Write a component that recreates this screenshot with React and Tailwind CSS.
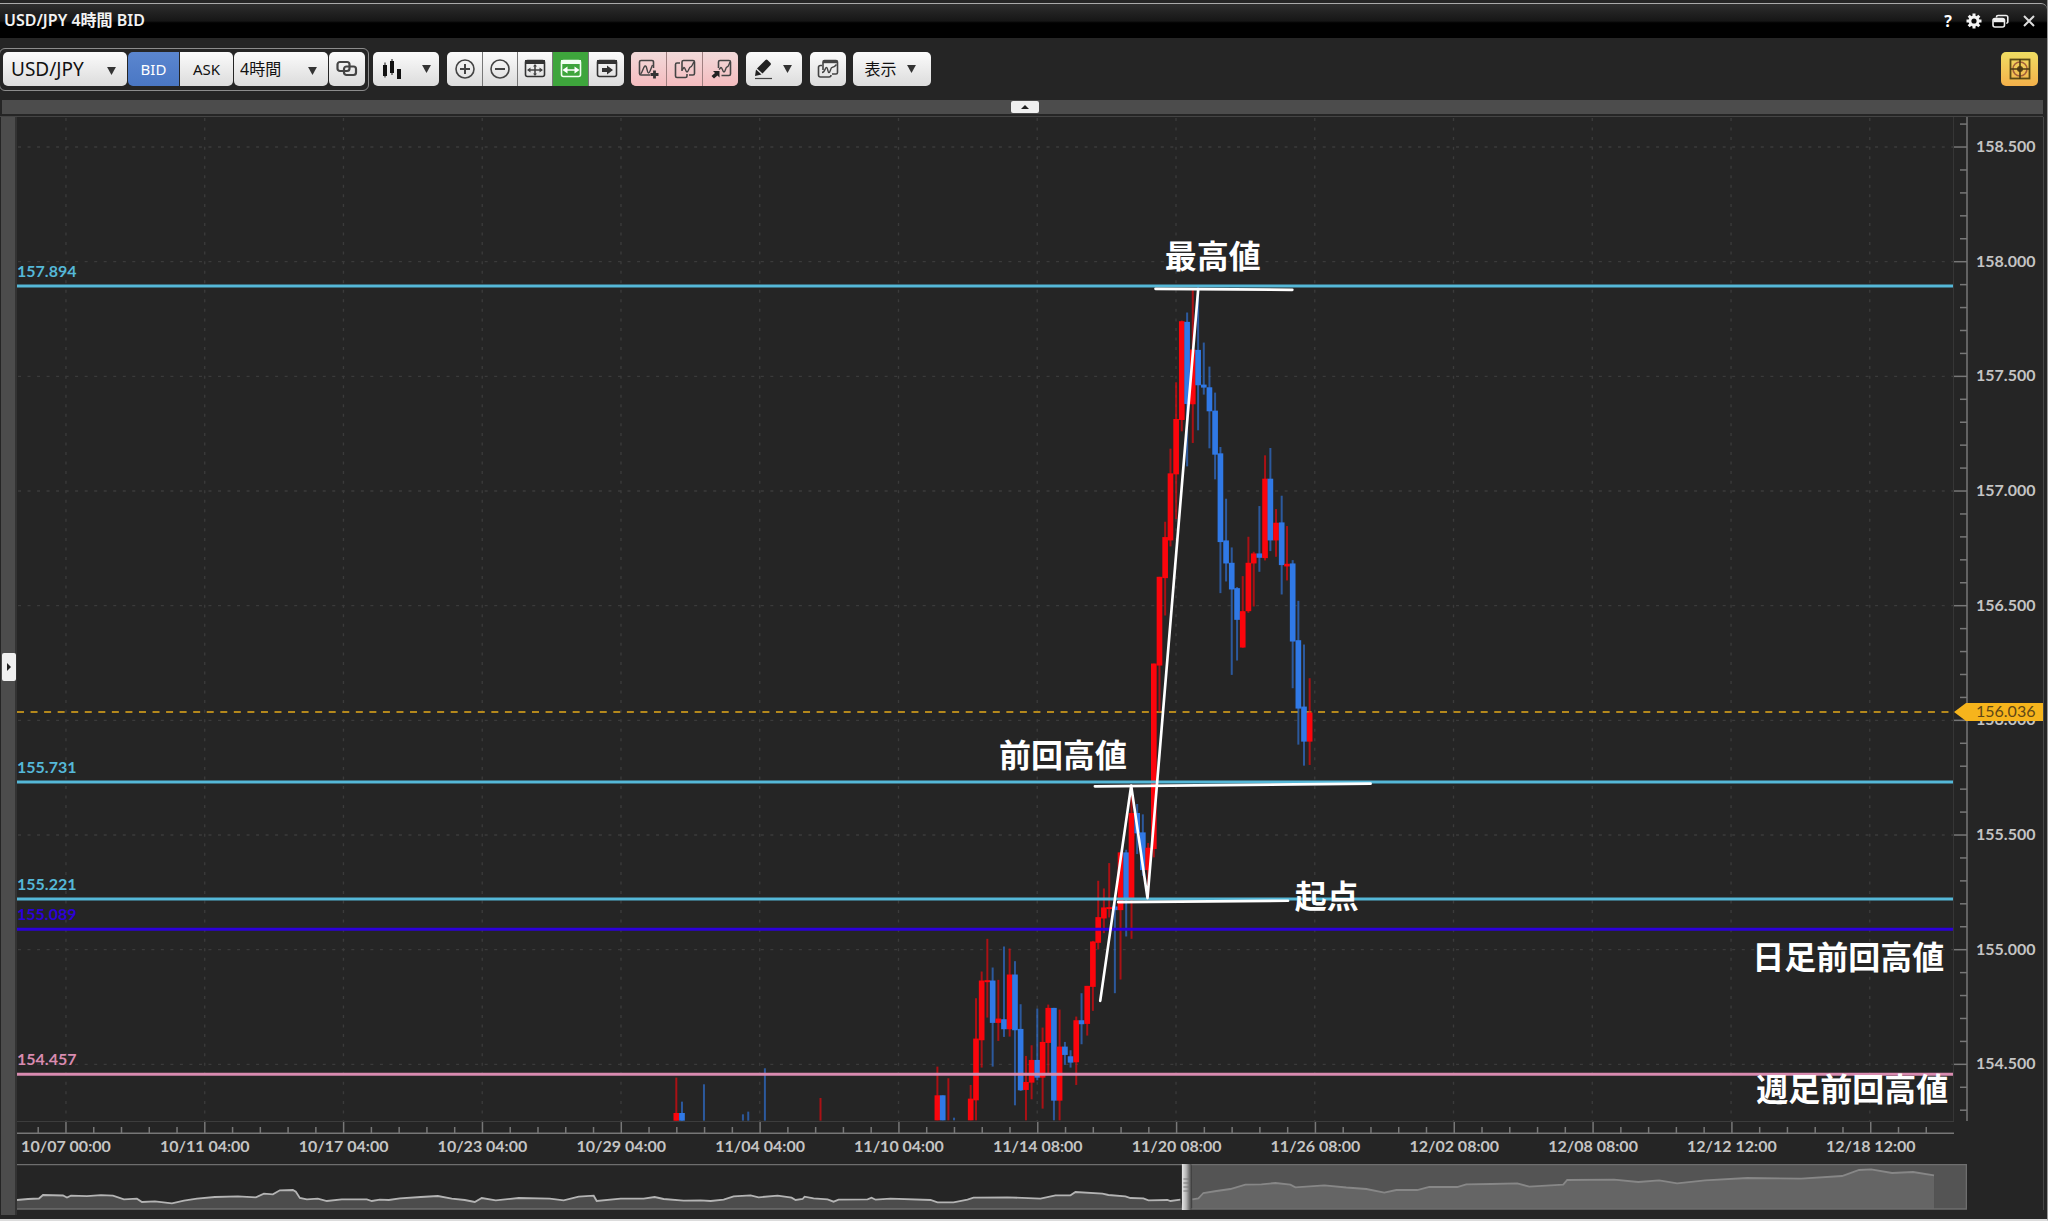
import React from "react";

const PLOT_W = 1938;
const PLOT_H = 1003;
const priceY = (p) => 30 + (158.5 - p) * 229.1;
const pctY = (y) => (y / PLOT_H) * 100 + "%";
const pctX = (x) => (x / PLOT_W) * 100 + "%";

const PRICES = [158.5, 158.0, 157.5, 157.0, 156.5, 156.0, 155.5, 155.0, 154.5];
const TIMES = [
  "10/07 00:00", "10/11 04:00", "10/17 04:00", "10/23 04:00", "10/29 04:00",
  "11/04 04:00", "11/10 04:00", "11/14 08:00", "11/20 08:00", "11/26 08:00",
  "12/02 08:00", "12/08 08:00", "12/12 12:00", "12/18 12:00",
];
const timeX = (i) => 49 + i * 138.9;

const LEVELS = [
  { price: 157.894, color: "#55b8d8" },
  { price: 155.731, color: "#55b8d8" },
  { price: 155.221, color: "#55b8d8" },
  { price: 155.089, color: "#2c00d8" },
  { price: 154.457, color: "#d98bb0" },
];

const NOTES = [
  { text: "最高値", x: 1149, y: 139 },
  { text: "前回高値", x: 983, y: 637 },
  { text: "起点", x: 1279, y: 778 },
  { text: "日足前回高値", x: 1737, y: 839 },
  { text: "週足前回高値", x: 1741, y: 971 },
];

// Candles, in thirds of a plot unit: [x, up, wick top, body top, body bottom, wick bottom]
const SEGMENTS = [
  {
    at: [1872, 2799],
    bars: [
      [108, 1, 80, 186, 209, 209], [125, 0, 152, 186, 209, 209], [191, 0, 100, 0, 0, 209],
      [308, 0, 190, 0, 0, 209], [324, 0, 182, 0, 0, 209], [374, 0, 52, 0, 0, 209], [541, 1, 141, 0, 0, 209],
    ],
  },
  {
    at: [2652, 1749],
    bars: [
      [112, 1, 1097, 1183, 1258, 1258], [128, 0, 1183, 1183, 1258, 1258], [145, 1, 1132, 0, 0, 1258],
      [162, 0, 1250, 0, 0, 1258], [212, 1, 1152, 1193, 1258, 1258], [228, 1, 892, 1013, 1198, 1258],
      [245, 1, 812, 839, 1018, 1100], [262, 1, 714, 838, 844, 950], [278, 0, 800, 839, 966, 1097],
      [295, 1, 837, 953, 966, 1020], [312, 0, 737, 955, 985, 1008], [329, 1, 743, 821, 985, 1007],
      [345, 0, 781, 821, 988, 1213], [362, 0, 910, 984, 1168, 1170], [378, 1, 1065, 1143, 1167, 1258],
      [395, 1, 1033, 1077, 1145, 1195], [412, 0, 923, 1077, 1130, 1138], [428, 1, 980, 1023, 1130, 1223],
      [445, 1, 911, 921, 1026, 1120], [462, 0, 921, 921, 1199, 1258], [479, 1, 926, 1037, 1199, 1258],
      [495, 0, 1023, 1037, 1062, 1092], [512, 0, 1048, 1066, 1085, 1100], [529, 1, 947, 958, 1084, 1152],
      [545, 0, 877, 958, 970, 1030], [562, 1, 855, 855, 969, 1004], [579, 1, 720, 722, 858, 930],
      [595, 1, 540, 649, 726, 746], [612, 1, 563, 620, 653, 697], [628, 1, 487, 619, 625, 650],
      [645, 0, 600, 617, 628, 877], [662, 1, 455, 455, 628, 836], [679, 0, 447, 455, 592, 707],
      [695, 1, 260, 337, 592, 714], [712, 0, 310, 337, 398, 460], [729, 0, 341, 395, 508, 525],
      [745, 1, 427, 441, 508, 590], [762, 1, -111, -111, 445, 470],
    ],
  },
  {
    at: [3132, 339],
    bars: [
      [299, 1, 1039, 1039, 1305, 1445], [316, 1, 874, 920, 1043, 1155], [332, 1, 655, 729, 930, 948],
      [349, 1, 456, 566, 732, 866], [366, 1, 271, 273, 569, 603], [382, 0, 247, 275, 521, 708],
      [399, 1, 175, 358, 522, 638], [415, 0, 170, 359, 465, 600], [432, 0, 337, 463, 472, 493],
      [449, 0, 409, 471, 543, 654], [466, 0, 487, 541, 673, 747], [482, 0, 650, 669, 935, 1088],
      [499, 0, 805, 930, 999, 1053], [516, 0, 951, 997, 1077, 1333], [532, 0, 1070, 1073, 1168, 1290],
      [549, 1, 1037, 1142, 1251, 1252], [566, 1, 919, 997, 1142, 1147], [582, 1, 964, 969, 999, 1128],
      [599, 0, 827, 969, 982, 1024], [616, 1, 675, 745, 983, 990], [632, 0, 653, 745, 930, 962],
      [649, 1, 836, 877, 930, 979], [666, 0, 796, 876, 1004, 1092], [682, 1, 887, 1000, 1008, 1050],
      [699, 0, 989, 999, 1233, 1373], [716, 0, 1111, 1229, 1434, 1542], [733, 0, 1242, 1428, 1533, 1605],
      [750, 1, 1343, 1446, 1533, 1603],
    ],
  },
];

const NAV_LEFT =
  "0,36 11,35 22,34.5 26,31 46,31.5 50,33.5 54,31.7 70,32.2 84,31.2 96,31.7 107,35.3 120,34.7 125,38 138,37.3 155,39.3 167,36.7 180,34.7 198,33 221,32.3 239,33.3 247,29.7 256,30.3 263,26.3 276,26 279,27.7 283,34 290,35.3 301,34.7 310,37 325,35.3 350,35.3 355,37 363,35.7 372,36 383,34.3 404,33 421,32 435,34.7 448,36 458,38 465,34 479,36.3 502,34 533,34.7 547,36.3 562,32.7 577,31.7 580,37 604,34.7 627,34.7 638,33 647,35 667,36.7 684,36.3 694,37 707,35.7 717,32.3 734,31.3 742,33.3 761,31.7 775,33.7 779,36 786,35 788,32.7 797,34.3 811,35.3 817,37.7 822,35.7 851,35.3 855,33.7 859,35.7 874,34.7 914,36 921,38.3 937,38.3 951,35.7 957,33.7 991,33.3 1024,34.7 1039,31.3 1054,31.3 1059,28 1086,29.7 1092,31 1109,32.3 1114,34 1127,34.3 1132,36.3 1151,36 1154,37 1164,35.7";
const NAV_RIGHT =
  "1176,35.3 1182,34.3 1187,29 1200,27 1214,25 1229,20.7 1245,20.3 1259,19 1274,20.7 1279,23.3 1308,21.3 1330,23.5 1350,25 1368,28.7 1380,26 1401,26 1413,23 1441,23 1450,20.3 1475,20 1501,19.3 1513,22.7 1547,20.7 1551,16 1598,15.7 1622,18 1643,16.3 1661,19.3 1689,16.3 1731,14 1785,14.7 1826,12 1843,6 1855,5.3 1876,9 1897,8 1918,11.3";

const btn =
  "flex h-[34px] items-center justify-center bg-gradient-to-b from-[#fbfbfb] to-[#dcdcdc] text-[#111]";

function Icon({ children, w = 22, h = 22, vb = "0 0 22 22" }) {
  return (
    <svg width={w} height={h} viewBox={vb} fill="none" stroke="#444" strokeWidth="1.6" aria-hidden="true">
      {children}
    </svg>
  );
}

const Caret = () => (
  <svg width="9" height="8" viewBox="0 0 10 9" fill="#333" aria-hidden="true">
    <path d="M0 0h10L5 9z" />
  </svg>
);

function Picker({ label, options, className }) {
  return (
    <div className="relative">
      <select
        aria-label={label}
        className={`h-[34px] appearance-none rounded-[5px] bg-gradient-to-b from-[#fbfbfb] to-[#dcdcdc] text-[#111] ${className}`}
      >
        {options.map((o) => (
          <option key={o}>{o}</option>
        ))}
      </select>
      <span className="pointer-events-none absolute inset-y-0 right-[11px] flex items-center pt-1">
        <Caret />
      </span>
    </div>
  );
}

function TitleBar() {
  return (
    <header className="flex h-[35px] items-center justify-between rounded-tr-md border-t border-[#aaa] bg-gradient-to-b from-[#2e2e2e] from-0% via-[#161616] via-50% to-black to-60% pr-3 pb-0.5 pl-1">
      <h1 className="text-base leading-5 font-semibold text-[#f2f2f2]">USD/JPY 4時間 BID</h1>
      <div className="flex items-center gap-2.5 pt-0.5">
        <button aria-label="ヘルプ" className="w-4 text-center text-base leading-5 font-bold text-white">?</button>
        <button aria-label="設定">
          <svg width="16" height="16" viewBox="0 0 16 16" aria-hidden="true">
            <g stroke="#f4f4f4" strokeWidth="3">
              <path d="M8 0.5v15M0.5 8h15M2.7 2.7l10.6 10.6M13.3 2.7L2.7 13.3" />
            </g>
            <circle cx="8" cy="8" r="5.5" fill="#f4f4f4" />
            <circle cx="8" cy="8" r="2.6" fill="#0a0a0a" />
          </svg>
        </button>
        <button aria-label="元に戻す">
          <svg width="17" height="14" viewBox="0 0 17 14" fill="none" stroke="#eee" aria-hidden="true">
            <path d="M4.500 3.500V3a1.500 1.500 0 0 1 1.500-1.500h8A1.800 1.800 0 0 1 15.800 3.300v4.400A1.500 1.500 0 0 1 14.300 9.200" strokeWidth="1.600" />
            <rect x="1" y="4.500" width="11.500" height="8.500" rx="2" strokeWidth="1.600" />
            <path d="M1.500 6.500h10.500" strokeWidth="3.400" />
          </svg>
        </button>
        <button aria-label="閉じる" className="ml-1">
          <svg width="12" height="12" viewBox="0 0 12 12" stroke="#ddd" strokeWidth="2" aria-hidden="true">
            <path d="M1 1l10 10M11 1L1 11" />
          </svg>
        </button>
      </div>
    </header>
  );
}

const WindowShape = ({ color = "#333" }) => (
  <>
    <rect x="1.500" y="2.500" width="19" height="16" rx="2" stroke={color} />
    <path d="M1 4h20" stroke={color} strokeWidth="4" />
  </>
);

function Toolbar() {
  return (
    <div className="flex h-[62px] items-center justify-between bg-[#252525] pr-[9px]">
      <div className="flex items-center">
        <div className="-ml-px flex h-[43px] items-center gap-px rounded-md border border-[#8c8c8c] px-[3px]">
          <Picker label="通貨ペア" options={["USD/JPY", "EUR/JPY"]} className="w-[124px] pl-2 text-[19px]" />
          <div className="flex gap-px">
            <button className="h-[34px] w-[51px] rounded-l-[5px] bg-gradient-to-b from-[#5b86cf] to-[#4a77c4] text-[15px] text-white">BID</button>
            <button className={`${btn} w-[53px] rounded-r-[5px] text-[15px]`}>ASK</button>
          </div>
          <Picker label="時間足" options={["4時間", "1時間", "日足"]} className="w-[94px] pl-1.5 text-base" />
          <button aria-label="連動" className={`${btn} w-9 rounded-[5px]`}>
            <Icon>
              <rect x="1.500" y="4" width="12" height="9" rx="2.500" strokeWidth="2.200" />
              <rect x="8" y="8.500" width="12" height="8.500" rx="2.500" strokeWidth="2.200" />
            </Icon>
          </button>
        </div>
        <button aria-label="チャート種類" className={`${btn} ml-1 w-[66px] gap-5 rounded-[5px]`}>
          <svg width="20" height="22" viewBox="0 0 20 22" fill="#111" aria-hidden="true">
            <path d="M1 7h4v11H1zM2.500 4.500h1v15h-1zM8 3h4v12H8zM9.500 1h1v16h-1zM15 11h4v10h-4z" />
          </svg>
          <Caret />
        </button>
        <div className="ml-2 flex gap-px overflow-hidden rounded-[5px] bg-[#777]">
          <button aria-label="拡大" className={`${btn} w-[35px]`}>
            <Icon><circle cx="11" cy="11" r="9" /><path d="M6 11h10M11 6v10" strokeWidth="2" /></Icon>
          </button>
          <button aria-label="縮小" className={`${btn} w-[34px]`}>
            <Icon><circle cx="11" cy="11" r="9" /><path d="M6 11h10" strokeWidth="2" /></Icon>
          </button>
          <button aria-label="全体表示" className={`${btn} w-[34px]`}>
            <Icon>
              <WindowShape />
              <path d="M4 12h14M11 7v10" />
              <path d="M3 12l3.500-2.500v5zM19 12l-3.500-2.500v5zM11 6l-2 2.500h4zM11 18l-2-2.500h4z" fill="#444" stroke="none" />
            </Icon>
          </button>
          <button aria-label="幅を合わせる" className="flex h-[34px] w-[35px] items-center justify-center bg-[#3ea53c]">
            <Icon>
              <WindowShape color="#f2fff2" />
              <path d="M5 12h12" stroke="#fff" />
              <path d="M2.500 12l5-3.500v7zM19.500 12l-5-3.500v7z" fill="#fff" stroke="none" />
            </Icon>
          </button>
          <button aria-label="最新へ移動" className={`${btn} w-[35px]`}>
            <Icon><WindowShape /><path d="M6 10h5V7.500l6 4.500-6 4.500V14H6z" fill="#333" stroke="none" /></Icon>
          </button>
        </div>
        <div className="ml-[7px] flex gap-px overflow-hidden rounded-[5px] bg-[#a08080]">
          {[
            <g key="a">
              <path d="M15.500 10V4a1.500 1.500 0 0 0-1.500-1.500H3A1.500 1.500 0 0 0 1.500 4v11.500A1.500 1.500 0 0 0 3 17h9" />
              <path d="M2.500 16c2-1 2.500-7 4.500-8s2 7 3.500 7 2.500-5 4-8" strokeWidth="1.400" />
              <path d="M12.500 16.500h8M16.500 12.500v8" strokeWidth="2.800" stroke="#333" />
            </g>,
            <g key="b">
              <path d="M8 13V4a1.500 1.500 0 0 1 1.500-1.500h9.500A1.500 1.500 0 0 1 20.500 4v11.500A1.500 1.500 0 0 1 19 17h-4" />
              <path d="M6 5H3A1.500 1.500 0 0 0 1.500 6.500v11.500A1.500 1.500 0 0 0 3 19.500h8.500A1.500 1.500 0 0 0 13 18v-2" />
              <path d="M8 12l2-2.500c1.500 0 1.500 4.500 3 4.500s2-5 3.500-5 2-3 3.500-5" strokeWidth="1.400" />
            </g>,
            <g key="c">
              <path d="M8.500 10V4A1.500 1.500 0 0 1 10 2.500h9A1.500 1.500 0 0 1 20.500 4v12a1.500 1.500 0 0 1-1.500 1.500h-7.500" />
              <path d="M9 11.500l2-2c1.500 0 1.500 4.500 3 4.500s1.500-5 3-5 2-3 3-5" strokeWidth="1.400" />
              <path d="M3 13h6.500v6.500l-2-2L4 20.500 1.500 18 5 15z" fill="#222" stroke="none" />
            </g>,
          ].map((g, i) => (
            <button key={i} aria-label={["テクニカル追加", "テクニカル複製", "テクニカル移動"][i]} className="flex h-[34px] w-[35px] items-center justify-center bg-gradient-to-b from-[#f2dada] to-[#f4bcbf]">
              <Icon>{g}</Icon>
            </button>
          ))}
        </div>
        <button aria-label="描画" className={`${btn} ml-2 w-14 gap-2 rounded-[5px] pr-1`}>
          <Icon>
            <path d="M2 18l1-6.500 5.500 5z" fill="#222" stroke="none" />
            <path d="M4 10.500l8.500-8.500a1.500 1.500 0 0 1 2 0l3 3a1.500 1.500 0 0 1 0 2L9.500 15.500z" fill="#222" stroke="none" />
            <path d="M2 20.500h17" strokeWidth="1.200" />
          </Icon>
          <Caret />
        </button>
        <button aria-label="チャート保存" className={`${btn} ml-2 w-9 rounded-[5px]`}>
          <Icon>
            <path d="M6 12V4a1.500 1.500 0 0 1 1.500-1.500h11.500A1.500 1.500 0 0 1 20.500 4v10.500A1.500 1.500 0 0 1 19 16h-4" />
            <path d="M6 4h14.500" strokeWidth="2.400" />
            <path d="M5 7.500H3.500A2 2 0 0 0 1.500 9.500v7.500a2 2 0 0 0 2 2h8.500a2 2 0 0 0 2-2" />
            <path d="M5 14.500c3 0 3-5 4.500-5s1 5 2.500 5 1.500-5 3-5 3-1 4.500-3" strokeWidth="1.400" />
          </Icon>
        </button>
        <button className={`${btn} ml-[7px] w-[78px] gap-2.5 rounded-[5px] pr-1 text-base`}>
          表示
          <Caret />
        </button>
      </div>
      <button aria-label="照準" className="flex h-[34px] w-[37px] items-center justify-center rounded-[5px] bg-gradient-to-b from-[#f0dd62] to-[#f3b04a]">
        <Icon>
          <rect x="1.500" y="1.500" width="19" height="19" stroke="#5b4a14" strokeWidth="1.800" />
          <circle cx="11" cy="11" r="7" stroke="#a5603a" />
          <circle cx="11" cy="11" r="3" fill="#5b3f1c" stroke="none" />
          <path d="M1 11h20M11 1v20" stroke="#4a3a12" />
        </Icon>
      </button>
    </div>
  );
}

function Plot() {
  return (
    <div className="relative min-w-0 flex-1 overflow-hidden border-r border-[#363636]">
      <svg className="absolute inset-0 h-full w-full" viewBox="0 0 5814 3009" preserveAspectRatio="none" aria-hidden="true">
        <g stroke="#3b3b3b" strokeWidth="4" strokeDasharray="9 19.600">
          {PRICES.map((p) => (
            <path key={p} d={`M3 ${priceY(p) * 3}H5814`} />
          ))}
          {TIMES.map((t, i) => (
            <path key={t} d={`M${timeX(i) * 3} 3V3009`} />
          ))}
        </g>
        <path d={`M0 ${priceY(156.036) * 3}H5814`} stroke="#b4881c" strokeWidth="6" strokeDasharray="21 19.700" />
        {SEGMENTS.map((s) => (
          <g key={s.at[0]} transform={`translate(${s.at[0]} ${s.at[1]})`}>
            {s.bars.map(([x, up, wt, bt, bb, wb]) => (
              <g key={x} fill={up ? "#fb050c" : "#3079e6"}>
                <rect x={x - 3} y={wt} width="6" height={wb - wt} opacity="0.62" />
                {bb > bt && <rect x={x - 8.5} y={bt} width="17" height={bb - bt} />}
              </g>
            ))}
          </g>
        ))}
        {LEVELS.map((l) => (
          <path key={l.price} d={`M0 ${priceY(l.price) * 3}H5814`} stroke={l.color} strokeWidth="9" />
        ))}
        <g fill="none" stroke="#fff" strokeWidth="8" strokeLinecap="round" strokeLinejoin="round">
          <path d="M3253 2649L3346 2004L3395 2341L3547 519" />
          <path d="M3419 515L3830 518" />
          <path d="M3237 2006L4065 1998" />
          <path d="M3307 2353L3817 2349" />
        </g>
      </svg>
      {LEVELS.map((l) => (
        <span
          key={l.price}
          className="absolute left-0 -translate-y-full pb-[5px] font-[Lato] text-base leading-5 font-bold"
          style={{ top: pctY(priceY(l.price)), color: l.color }}
        >
          {l.price.toFixed(3)}
        </span>
      ))}
      {NOTES.map((n) => (
        <span
          key={n.text}
          className="absolute -translate-y-1/2 text-[32px] leading-10 font-bold whitespace-nowrap text-white"
          style={{ left: pctX(n.x), top: pctY(n.y) }}
        >
          {n.text}
        </span>
      ))}
    </div>
  );
}

function PriceAxis() {
  const minors = Array.from({ length: 44 }, (_, i) => 30 + (i - 1) * 22.91);
  return (
    <div className="relative w-[89px] shrink-0">
      <svg className="absolute top-0 left-0 h-full w-3.5" viewBox="0 0 14 1003" preserveAspectRatio="none" stroke="#777" strokeWidth="1.5" aria-hidden="true">
        <path d="M13 0V1003" />
        {minors.map((y, i) => (
          <path key={i} d={`M${(i + 4) % 5 === 0 ? 0 : 6} ${y}H13`} />
        ))}
      </svg>
      {PRICES.map((p) => (
        <span key={p} className="absolute left-[22px] -translate-y-1/2 pb-0.5 font-[Lato] text-base leading-5 font-bold text-[#c4c4c4]" style={{ top: pctY(priceY(p)) }}>
          {p.toFixed(3)}
        </span>
      ))}
      <div className="absolute right-0 left-0 flex h-[18px] -translate-y-1/2" style={{ top: pctY(priceY(156.036)) }}>
        <svg width="12" height="18" viewBox="0 0 12 18" aria-hidden="true">
          <path d="M0 9L12 0V18z" fill="#f6b41c" />
        </svg>
        <span className="flex-1 bg-[#f6b41c] pl-2.5 font-[Lato] text-base leading-4 text-[#5f4716]">156.036</span>
      </div>
    </div>
  );
}

function TimeAxis() {
  const ticks = Array.from({ length: 69 }, (_, i) => 49 + (i - 1) * 27.78);
  return (
    <div className="flex h-[43px] pr-[89px]">
      <div className="relative flex-1 border-t border-[#3d3d3d]">
        <svg className="absolute top-0 left-0 h-3 w-full" viewBox="0 0 1938 12" preserveAspectRatio="none" stroke="#777" strokeWidth="1.5" aria-hidden="true">
          {ticks.map((x, i) => (
            <path key={i} d={`M${x} ${(i + 4) % 5 === 0 ? 0 : 5}V12`} />
          ))}
          <path d="M0 11.200H1938" />
        </svg>
        {TIMES.map((t, i) => (
          <span key={t} className="absolute top-3.5 -translate-x-1/2 font-[Lato] text-base leading-5 font-bold whitespace-nowrap text-[#c4c4c4]" style={{ left: pctX(timeX(i)) }}>
            {t}
          </span>
        ))}
      </div>
    </div>
  );
}

function Navigator() {
  return (
    <div className="mr-[76px] h-[46px]">
      <svg className="h-full w-full" viewBox="0 0 1951 46" preserveAspectRatio="none" aria-hidden="true">
        <defs>
          <linearGradient id="grip">
            <stop offset="0" stopColor="#e8e8e8" />
            <stop offset="0.45" stopColor="#b5b5b5" />
            <stop offset="1" stopColor="#444" />
          </linearGradient>
        </defs>
        <path d={`M0 45L${NAV_LEFT} 1166,45z`} fill="#4c4c4c" />
        <polyline points={NAV_LEFT} fill="none" stroke="#b4b4b4" strokeWidth="1.8" />
        <path d="M1175 1H1951V45H1175z" fill="#545454" />
        <path d={`M1176 45L${NAV_RIGHT} 1918,45z`} fill="#656565" />
        <polyline points={NAV_RIGHT} fill="none" stroke="#878787" strokeWidth="1.8" />
        <path d="M0 0.500H1950.500V45H0" fill="none" stroke="#6e6e6e" strokeWidth="1.500" />
        <path d="M1165.500 -1h9.500v48h-9.500z" fill="url(#grip)" />
        <path d="M1167 15h6M1167 19h6M1167 23h6M1167 27h6" stroke="#777" />
      </svg>
    </div>
  );
}

export default function App() {
  return (
    <div className="flex min-h-screen flex-col border-r border-b-2 border-r-[#999] border-b-[#dcdcdc] bg-[#252525] pt-[3px] font-['Noto_Sans','Noto_Sans_CJK_JP',sans-serif]">
      <TitleBar />
      <Toolbar />
      <div className="mr-1 ml-0.5 flex h-[14px] items-center justify-center bg-[#4c4c4c] pl-1">
        <button aria-label="上部パネルを開く" className="flex h-3 w-7 items-center justify-center rounded-xs bg-[#f0f0f0]">
          <svg width="8" height="4" viewBox="0 0 8 4" fill="#222" aria-hidden="true"><path d="M0 4L4 0l4 4z" /></svg>
        </button>
      </div>
      <div className="mr-1 h-[3px] border-b border-[#444]" />
      <main className="flex flex-1 pr-[3px]">
        <div className="mb-1 ml-px flex w-4 shrink-0 items-center border-r-2 border-[#333] bg-[#4c4c4c] pt-0.5">
          <button aria-label="左パネルを開く" className="ml-px flex h-7 w-[14px] shrink-0 items-center justify-center rounded-xs bg-[#f0f0f0]">
            <svg width="4" height="8" viewBox="0 0 4 8" fill="#222" aria-hidden="true"><path d="M0 0l4 4-4 4z" /></svg>
          </button>
        </div>
        <div className="flex min-w-0 flex-1 flex-col pb-[9px]">
          <div className="flex flex-1 border-r border-[#484848]">
            <Plot />
            <PriceAxis />
          </div>
          <div className="border-r border-[#484848]">
            <TimeAxis />
            <Navigator />
          </div>
        </div>
      </main>
    </div>
  );
}
